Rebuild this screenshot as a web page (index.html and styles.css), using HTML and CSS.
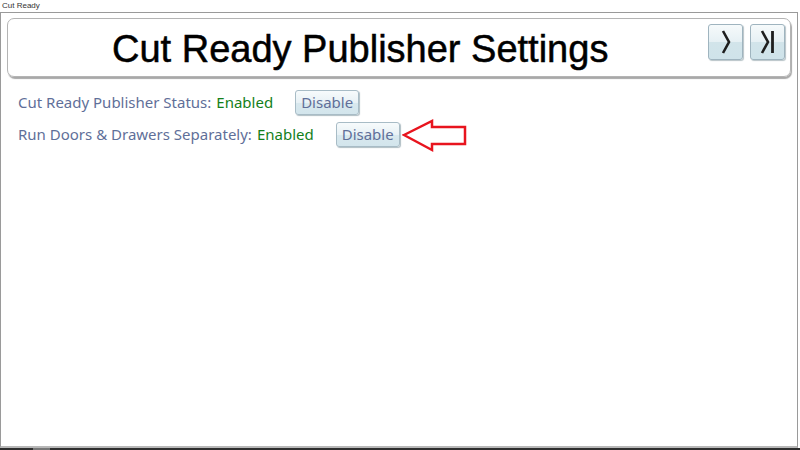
FILE: index.html
```html
<!DOCTYPE html>
<html>
<head>
<meta charset="utf-8">
<link rel="stylesheet" href="styles.css">
</head>
<body>
<div class="app">
  <div class="titlebar">Cut Ready</div>
  <div class="frame">
    <div class="header">
      <h1 class="title">Cut Ready Publisher Settings</h1>
      <div class="nav">
        <button class="navbtn" aria-label="Next">
          <svg width="14" height="26" viewBox="0 0 14 26"><path d="M4 2 L10 13 L4 24" fill="none" stroke="#1e1e1e" stroke-width="2.6" stroke-linejoin="miter"/></svg>
        </button>
        <button class="navbtn" aria-label="Last">
          <svg width="18" height="26" viewBox="0 0 18 26"><path d="M3 2 L9 13 L3 24" fill="none" stroke="#1e1e1e" stroke-width="2.6"/><path d="M13.5 2 V24" stroke="#1e1e1e" stroke-width="2.8"/></svg>
        </button>
      </div>
    </div>
    <div class="rows">
      <div class="row">
        <span class="label">Cut Ready Publisher Status:</span>
        <span class="status">Enabled</span>
        <button class="btn">Disable</button>
      </div>
      <div class="row">
        <span class="label">Run Doors &amp; Drawers Separately:</span>
        <span class="status">Enabled</span>
        <button class="btn">Disable</button>
        <svg class="arrow" width="68" height="34" viewBox="0 0 68 34"><path d="M2 16 L30 2 L30 8 L63 8 L63 25 L30 25 L30 31 Z" fill="none" stroke="#e8141e" stroke-width="2.5" stroke-linejoin="miter"/></svg>
      </div>
    </div>
  </div>
  <div class="taskbar"><span class="tab"></span></div>
</div>
</body>
</html>
```
FILE: styles.css
```css
html, body {
  margin: 0;
  padding: 0;
  background: #ffffff;
}
.app {
  width: 800px;
  height: 450px;
  display: flex;
  flex-direction: column;
  overflow: hidden;
  font-family: "Segoe UI", "Noto Sans", "Open Sans", sans-serif;
}
.titlebar {
  height: 12px;
  font-family: "Liberation Sans", Arial, sans-serif;
  font-size: 8px;
  line-height: 12px;
  color: #333;
  padding-left: 2px;
  background: #ffffff;
}
.frame {
  flex: 1;
  border: 1px solid #9a9a9a;
  border-bottom: 2px solid #b8b8b8;
  margin-right: 2px;
  padding: 5px 6px 0 6px;
  background: #fff;
  position: relative;
}
.header {
  height: 57px;
  border: 1px solid #b4b4b4;
  border-radius: 7px;
  box-shadow: 1px 2px 1px #a8a8a8;
  display: flex;
  align-items: flex-start;
}
.title {
  margin: 10px 0 0 104px;
  font-family: "Liberation Sans", Arial, sans-serif;
  font-weight: normal;
  font-size: 38px;
  line-height: 40px;
  color: #000;
  flex: 1;
  -webkit-text-stroke: 0.5px #000;
}
.nav {
  display: flex;
  gap: 7px;
  margin: 5px 5px 0 0;
}
.navbtn {
  width: 35px;
  height: 36px;
  padding: 0;
  border: 1px solid #9fb4bf;
  border-radius: 3px;
  background: linear-gradient(#f6fafb 0%, #e6f0f4 50%, #d2e4ea 51%, #cfe3ea 100%);
  box-shadow: 1px 1px 1px #b8c4c8;
  display: flex;
  align-items: center;
  justify-content: center;
}
.rows {
  display: flex;
  flex-direction: column;
  padding: 12px 0 0 11px;
  gap: 6px;
}
.row {
  display: flex;
  align-items: center;
  height: 26px;
  font-size: 15px;
  position: relative;
}
.label {
  color: #5f6f99;
}
.status {
  color: #14801a;
  margin-left: 5px;
}
.btn {
  margin-left: 22px;
  height: 25px;
  padding: 0 5px;
  font-family: "Segoe UI", "Noto Sans", "Open Sans", sans-serif;
  font-size: 15px;
  color: #5f6f99;
  border: 1px solid #a8bcc6;
  border-radius: 3px;
  background: linear-gradient(#f7fbfc 0%, #e8f1f5 50%, #d8e8ee 51%, #d3e5ec 100%);
  box-shadow: 1px 1px 1px #b0bec4;
  line-height: 22px;
}
.arrow {
  position: absolute;
  left: 384px;
  top: -2px;
}
.taskbar {
  height: 2px;
  background: #2e2e2e;
  position: relative;
}
.tab {
  position: absolute;
  left: 33px;
  width: 17px;
  height: 2px;
  background: #777;
}
```
